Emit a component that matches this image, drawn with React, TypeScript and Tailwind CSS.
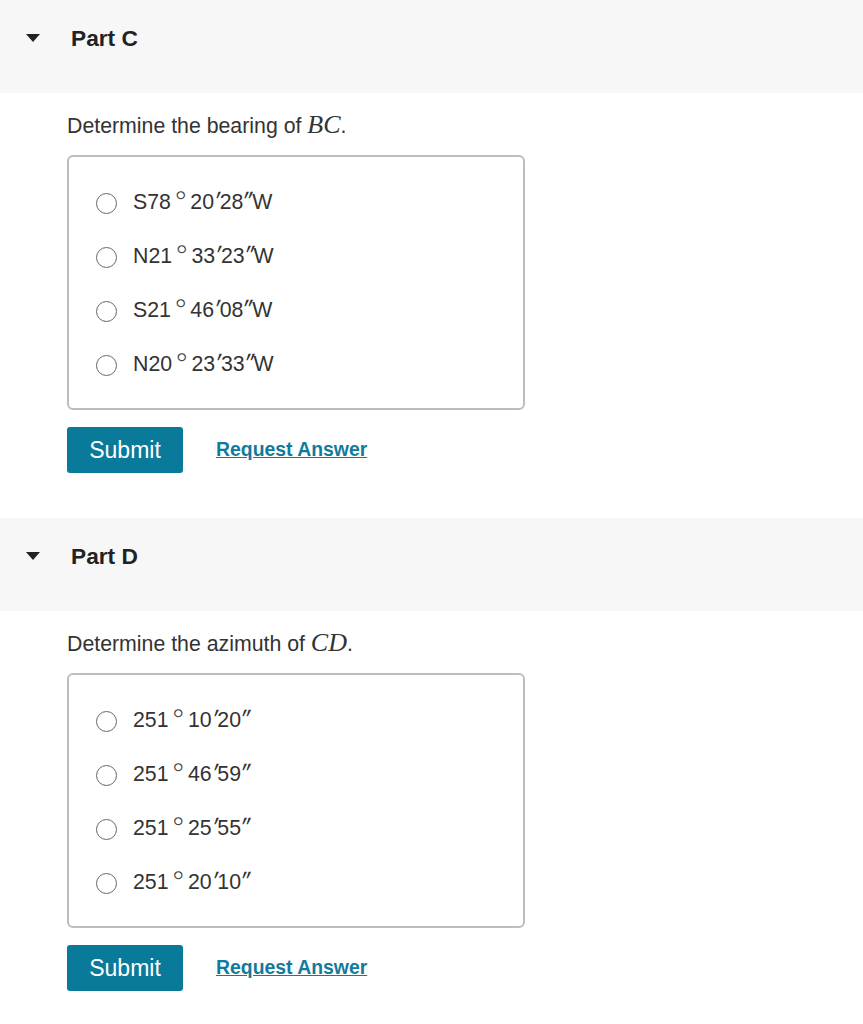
const parts = [
  {
    title: "Part C",
    prompt: "Determine the bearing of",
    math: "BC",
    options: [
      ["S", "78", "20", "28", "W"],
      ["N", "21", "33", "23", "W"],
      ["S", "21", "46", "08", "W"],
      ["N", "20", "23", "33", "W"],
    ],
  },
  {
    title: "Part D",
    prompt: "Determine the azimuth of",
    math: "CD",
    options: [
      ["", "251", "10", "20", ""],
      ["", "251", "46", "59", ""],
      ["", "251", "25", "55", ""],
      ["", "251", "20", "10", ""],
    ],
  },
];

const Angle = ({ parts: [pre, deg, min, sec, post] }: { parts: string[] }) => (
  <span className="-mt-[3px] whitespace-nowrap leading-[24px]">
    {pre}
    {deg}
    <span className="relative -top-[4px] font-['DejaVu_Sans',sans-serif] text-[31px] font-light leading-[0] text-[#444]">∘</span>
    {min}
    <span className="inline-block -skew-x-12 pl-[1px] text-[25px] leading-[0]">′</span>
    {sec}
    <span className="inline-block -skew-x-12 text-[25px] leading-[0]">″</span>
    {post}
  </span>
);

const Section = ({ part }: { part: (typeof parts)[number] }) => (
  <section>
    <div className="flex h-[93px] items-start bg-[#f7f7f7] pt-[25px]">
      <svg className="ml-[26px] mr-[31px] mt-[9px] h-[8px] w-[14px]" viewBox="0 0 14 8">
        <path d="M0 0h14L7 8z" fill="#222" />
      </svg>
      <h2 className="text-[22.7px] font-bold leading-[26px] text-[#222]">{part.title}</h2>
    </div>
    <div className="pl-[67px] pt-[19px]">
      <p className="h-[26px] text-[21.3px] leading-[26px] text-[#333]">
        {part.prompt}{" "}
        <span className="font-['Liberation_Serif',serif] text-[26px] italic leading-none">{part.math}</span>.
      </p>
      <div className="mt-[17px] w-[458px] rounded-[6px] border-2 border-[#bdbdbd] pb-[16px] pt-[19px]">
        {part.options.map((opt, i) => (
          <label key={i} className="flex h-[54px] items-center text-[21.3px] text-[#333]">
            <span className="ml-[27px] mr-[16px] h-[21px] w-[21px] shrink-0 rounded-full border-[1.5px] border-[#666]" />
            <Angle parts={opt} />
          </label>
        ))}
      </div>
      <div className="mt-[17px] flex h-[46px] items-center">
        <button className="h-[46px] w-[116px] rounded-[3px] bg-[#0a7a9b] text-[23px] text-white">
          Submit
        </button>
        <a href="#" className="ml-[33px] text-[19.4px] font-bold leading-none text-[#117b9c] underline">
          Request Answer
        </a>
      </div>
    </div>
  </section>
);

export default function App() {
  return (
    <div className="min-h-screen bg-white font-['Liberation_Sans',Arial,sans-serif]">
      <Section part={parts[0]} />
      <div className="h-[45px]" />
      <Section part={parts[1]} />
    </div>
  );
}
